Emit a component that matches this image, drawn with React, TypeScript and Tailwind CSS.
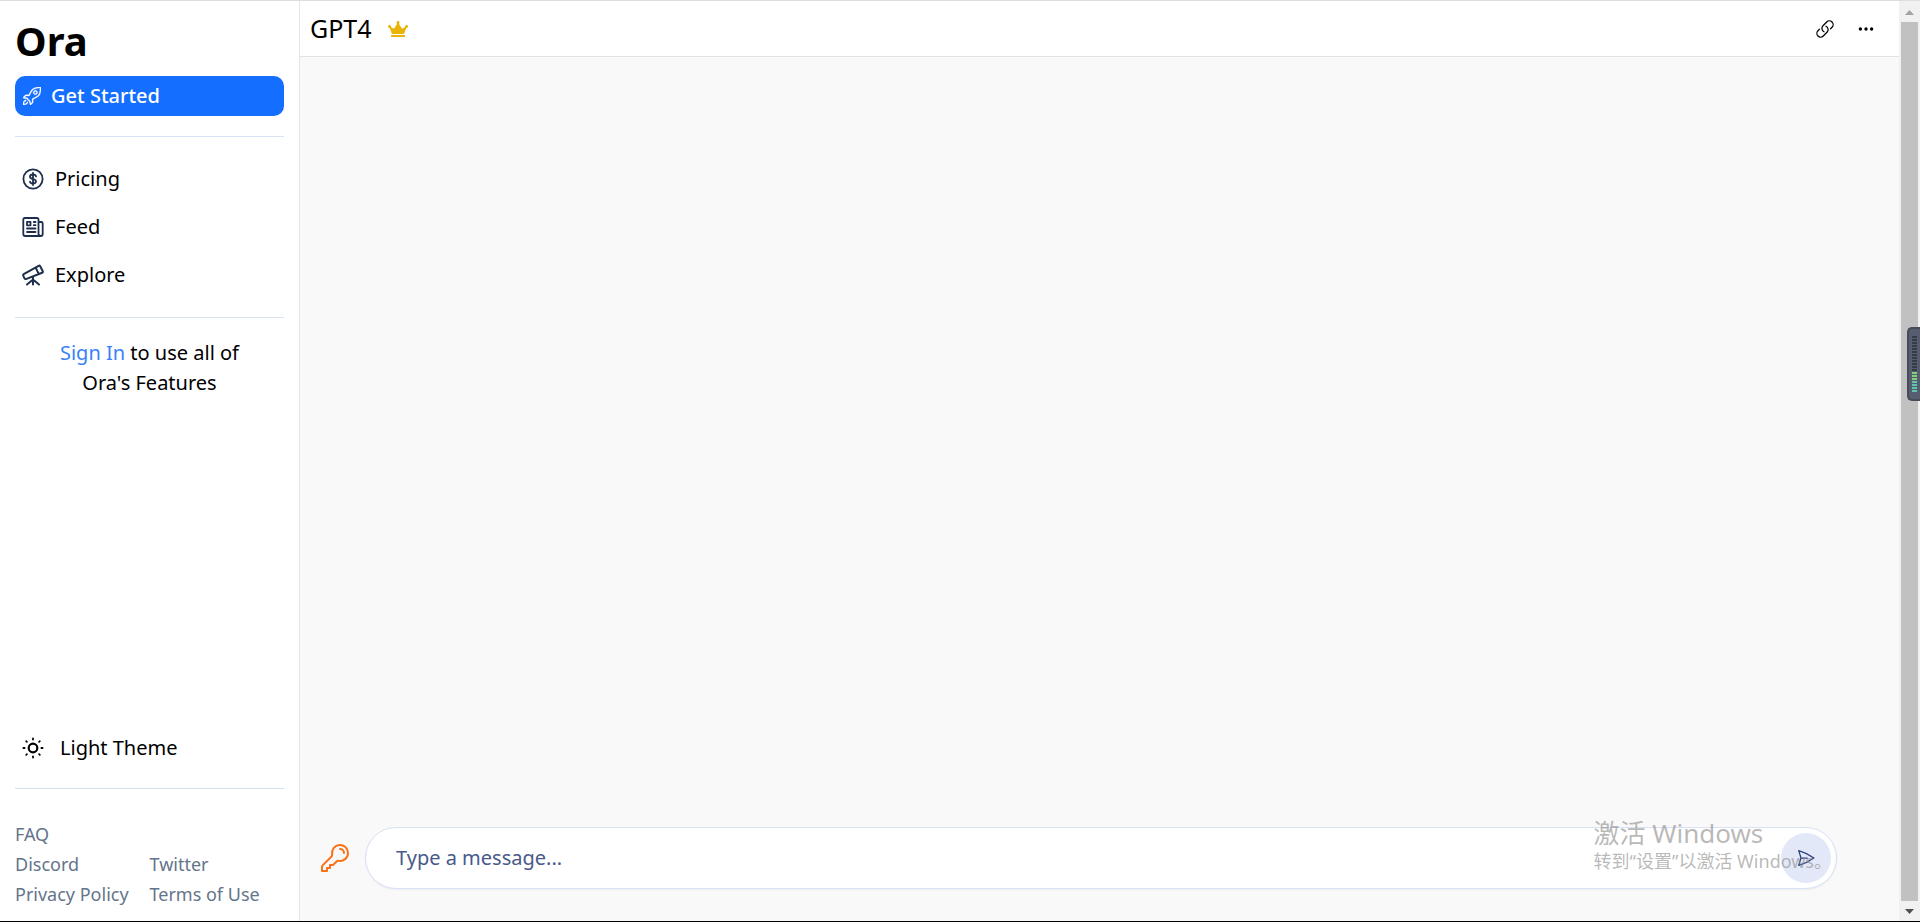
import type { ReactNode } from "react";
import { FaCrown } from "react-icons/fa";
import { SlRocket } from "react-icons/sl";
import { BsThreeDots } from "react-icons/bs";
import {
  HiOutlineKey,
  HiOutlineLink,
  HiOutlinePaperAirplane,
} from "react-icons/hi2";

const FOOTER_LINKS = ["Discord", "Twitter", "Privacy Policy", "Terms of Use"];

export default function App() {
  return (
    <div className="flex h-screen border-t border-b border-t-[#dedede] border-b-black bg-white font-['Noto_Sans','Noto_Sans_CJK_SC',sans-serif] text-black">
      <Sidebar />
      <Chat />
      <Scrollbar />
      <Watermark />
      <LevelMeter />
    </div>
  );
}

// ---------------------------------------------------------------------------
// Sidebar
// ---------------------------------------------------------------------------

function Sidebar() {
  return (
    <aside className="flex w-[300px] shrink-0 flex-col border-r border-[#e2e4e8] px-[15px] pt-[15px] pb-3">
      <h1 className="text-[40px] leading-[50px] font-bold">Ora</h1>
      <button
        type="button"
        className="mt-[10px] flex h-10 shrink-0 items-center gap-[10px] rounded-[10px] bg-[#146eff] px-2 text-[20px] font-medium text-white"
      >
        <SlRocket className="size-[18px]" strokeWidth={16} />
        Get Started
      </button>
      <hr className="mt-5 border-[#dae2f5]" />

      <nav className="mt-[18px] flex flex-col text-[20px]">
        <NavItem label="Pricing" icon={<DollarIcon />} />
        <NavItem label="Feed" icon={<NewsIcon />} />
        <NavItem label="Explore" icon={<TelescopeIcon />} />
      </nav>
      <hr className="mt-[18px] border-[#d8e3f0]" />

      <p className="mt-5 text-center text-[20px] leading-[30px]">
        <a href="#signin" className="text-[#3b82f6]">
          Sign In
        </a>{" "}
        to use all of
        <br />
        Ora's Features
      </p>

      <button
        type="button"
        className="mt-auto flex h-12 items-center gap-[15px] px-[6px] text-[20px]"
      >
        <SunIcon />
        Light Theme
      </button>
      <hr className="mt-4 border-[#d5dff5]" />

      <footer className="mt-[30px] grid grid-cols-2 text-[18px] leading-[30px] text-[#64748b]">
        <a href="#faq" className="col-span-2">
          FAQ
        </a>
        {FOOTER_LINKS.map((label) => (
          <a key={label} href="#" className="whitespace-nowrap">
            {label}
          </a>
        ))}
      </footer>
    </aside>
  );
}

function NavItem({ label, icon }: { label: string; icon: ReactNode }) {
  return (
    <a href="#" className="flex h-12 items-center gap-[10px] px-[6px]">
      <span className="text-[#1e2f4d]">{icon}</span>
      {label}
    </a>
  );
}

// ---------------------------------------------------------------------------
// Chat
// ---------------------------------------------------------------------------

function Chat() {
  return (
    <main className="flex min-w-0 flex-1 flex-col bg-[#f9f9f9]">
      <header className="flex h-14 items-center border-b border-[#e2e2e2] bg-white pr-6 pl-[10px]">
        <h2 className="text-[25px]">GPT4</h2>
        <FaCrown className="ml-4 size-5 text-[#eab308]" />
        <button type="button" aria-label="Copy link" className="ml-auto">
          <HiOutlineLink className="size-5" />
        </button>
        <button type="button" aria-label="More" className="ml-[22px]">
          <BsThreeDots className="size-[18px]" />
        </button>
      </header>

      <div className="flex-1" />

      <form className="mb-8 flex items-center gap-[14px] pr-[62px] pl-[19px]">
        <button type="button" aria-label="API key" className="text-[#f97316]">
          <HiOutlineKey className="size-8" />
        </button>
        <div className="flex h-[62px] flex-1 items-center rounded-full border border-[#d8e1f7] bg-white pr-[5px] pl-[30px] shadow-xs">
          <input
            type="text"
            aria-label="Message"
            placeholder="Type a message..."
            className="min-w-0 flex-1 text-[20px] outline-none placeholder:text-[#475a8a]"
          />
          <button
            type="submit"
            aria-label="Send"
            className="flex size-[50px] items-center justify-center rounded-full bg-[#e2e8f8] text-[#2c3f7a]"
          >
            <HiOutlinePaperAirplane className="size-5" />
          </button>
        </div>
      </form>
    </main>
  );
}

// ---------------------------------------------------------------------------
// Desktop overlays
// ---------------------------------------------------------------------------

function Scrollbar() {
  return (
    <div className="flex w-[21px] shrink-0 flex-col items-center bg-[#f1f1f1]">
      <svg viewBox="0 0 21 21" className="size-[21px] fill-[#a3a3a3]">
        <path d="M6 14h9l-4.500-5z" />
      </svg>
      <div className="w-[17px] flex-1 bg-[#c1c1c1]" />
      <svg viewBox="0 0 21 20" className="h-5 w-[21px] fill-[#505050]">
        <path d="M6 8h9l-4.500 5z" />
      </svg>
    </div>
  );
}

function Watermark() {
  return (
    <div className="pointer-events-none absolute right-[88px] bottom-[49px] text-[#8a8a8a]/60">
      <p className="text-[26px] leading-8">激活 Windows</p>
      <p className="text-[18px] leading-6">转到“设置”以激活 Windows。</p>
    </div>
  );
}

function LevelMeter() {
  const bars = Array.from({ length: 19 }, (_, i) => i);
  return (
    <div className="absolute top-[327px] right-0 flex h-[74px] w-[13px] flex-col items-end justify-center gap-px rounded-l-[5px] border-2 border-r-0 border-[#474b58] bg-[#565d70] pr-[3px]">
      {bars.map((i) => (
        <span
          key={i}
          className={
            i < 12
              ? "h-[2px] w-[5px] bg-[#363b48]"
              : i < 15
                ? "h-[2px] w-[5px] bg-[#84cf7d]"
                : "h-[2px] w-[5px] bg-[#5cc7ae]"
          }
        />
      ))}
    </div>
  );
}

// ---------------------------------------------------------------------------
// Icons
// ---------------------------------------------------------------------------

function LineIcon({ children }: { children: ReactNode }) {
  return (
    <svg
      viewBox="0 0 24 24"
      fill="none"
      stroke="currentColor"
      strokeWidth={1.8}
      strokeLinecap="round"
      strokeLinejoin="round"
      className="size-6"
    >
      {children}
    </svg>
  );
}

function DollarIcon() {
  return (
    <LineIcon>
      <circle cx="12" cy="12" r="9.600" />
      <path d="M12 6v12M15 9.400c0-1.100-1.300-1.900-3-1.900s-3 .8-3 2.200c0 3.100 6 1.500 6 4.600 0 1.400-1.300 2.200-3 2.200s-3-.8-3-1.900" />
    </LineIcon>
  );
}

function NewsIcon() {
  return (
    <LineIcon>
      <path d="M17.500 18.500V4.500a1.500 1.500 0 0 0-1.500-1.500H3.800a1.500 1.500 0 0 0-1.500 1.500v14.500a2 2 0 0 0 2 2h15.400a2 2 0 0 0 2-2V8.500a1.500 1.500 0 0 0-1.500-1.500h-2.700M17.500 18.500a2.300 2.300 0 0 0 2 2.500" />
      <path d="M6 6.800h3.500v3.500H6zM12.800 7h1.700M12.800 10.200h1.700M6 13.500h8.500M6 17h8.500" />
    </LineIcon>
  );
}

function TelescopeIcon() {
  return (
    <LineIcon>
      <path
        strokeWidth={2}
        d="M2.700 11.200 17.600 2.800a1.200 1.200 0 0 1 1.600.4l2.600 5a1.200 1.200 0 0 1-.6 1.600L5.500 15.900a1.700 1.700 0 0 1-2.100-.7l-1.100-2.400a1.200 1.200 0 0 1 .4-1.600zM14.700 4.600l3 6.300M12 14v7.500M12 16.500l-6 5M12 16.500l6 5"
      />
    </LineIcon>
  );
}

function SunIcon() {
  return (
    <LineIcon>
      <circle cx="12" cy="12" r="4.300" strokeWidth={2.2} />
      <path d="M12 2.400v1.200M12 20.400v1.200M2.400 12h1.200M20.400 12h1.200M5.200 5.200l.7.7M18.100 18.100l.7.7M5.200 18.800l.7-.7M18.100 5.900l.7-.7" />
    </LineIcon>
  );
}
